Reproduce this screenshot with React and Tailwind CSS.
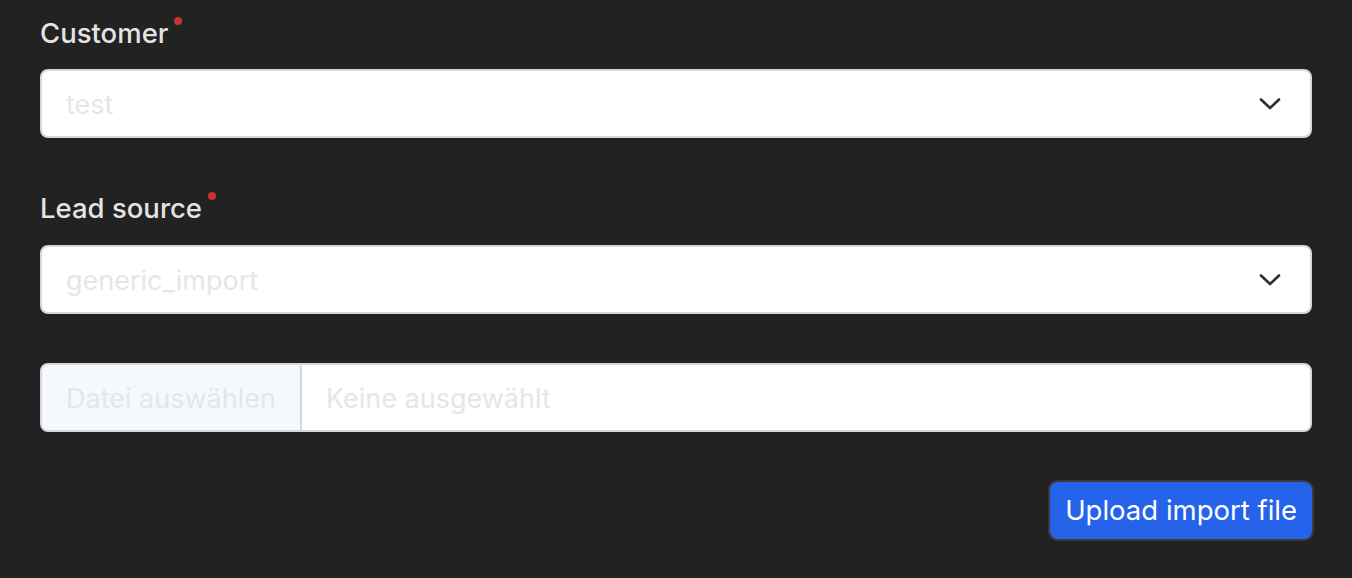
import React from "react";

function Chevron() {
  return (
    <svg width="22" height="14" viewBox="0 0 22 14" fill="none" className="shrink-0">
      <path d="M2 2.5 L11 11 L20 2.5" stroke="#2b2f36" strokeWidth="2.6" strokeLinecap="round" strokeLinejoin="round" />
    </svg>
  );
}

function Label({ children }) {
  return (
    <div className="flex items-start h-[32px]">
      <span className="text-[27.5px] leading-[32px] font-medium text-[#e4e4e4]">{children}</span>
      <span className="ml-[6px] mt-0 w-[8px] h-[8px] rounded-full bg-[#c53434]" />
    </div>
  );
}

function Select({ value }) {
  return (
    <div className="flex items-center justify-between h-[69px] bg-white border-2 border-[#d3d7de] rounded-[8px] pl-[24px] pr-[29px]">
      <span className="text-[27px] text-[#e6e6e6] pt-[3px]">{value}</span>
      <Chevron />
    </div>
  );
}

export default function App() {
  return (
    <div className="min-h-[578px] bg-[#222222] px-[40px] pt-[17px]" style={{ fontFamily: "Inter, 'Noto Sans', sans-serif" }}>
      <Label>Customer</Label>
      <div className="mt-[20px]">
        <Select value="test" />
      </div>
      <div className="mt-[54px]">
        <Label>Lead source</Label>
      </div>
      <div className="mt-[21px]">
        <Select value="generic_import" />
      </div>
      <div className="mt-[49px] flex h-[69px] bg-white border-2 border-[#d3d7de] rounded-[8px] overflow-hidden">
        <div className="shrink-0 bg-[#f5f8fc] border-r-2 border-[#d3d7de] flex items-center px-[24px]">
          <span className="text-[27px] text-[#e6e6e6] whitespace-nowrap pt-[3px]">Datei auswählen</span>
        </div>
        <div className="flex items-center pl-[24px]">
          <span className="text-[27px] text-[#e6e6e6] whitespace-nowrap pt-[3px]">Keine ausgewählt</span>
        </div>
      </div>
      <div className="mt-[48px] flex justify-end -mr-[2px]">
        <button className="h-[61px] px-[15px] bg-[#2563eb] border-2 border-[#3b3b3b] rounded-[10px] text-[27.5px] text-white font-normal">
          Upload import file
        </button>
      </div>
    </div>
  );
}
